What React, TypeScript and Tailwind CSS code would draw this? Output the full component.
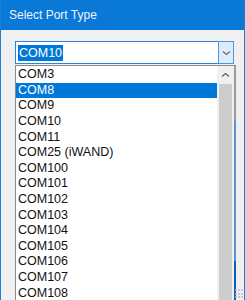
import React from "react";

const items = [
  "COM3",
  "COM8",
  "COM9",
  "COM10",
  "COM11",
  "COM25 (iWAND)",
  "COM100",
  "COM101",
  "COM102",
  "COM103",
  "COM104",
  "COM105",
  "COM106",
  "COM107",
  "COM108",
];

export default function App() {
  return (
    <div
      className="relative w-[245px] h-[300px] overflow-hidden bg-[#f0f0f0] border-x border-[#1a7fd6] flex flex-col"
      style={{ fontFamily: '"Liberation Sans", Arial, sans-serif' }}
    >
      <div className="h-[30px] shrink-0 bg-[#0a78d7] flex items-center pl-[8px] text-[12px] text-[#eef5fc]">
        Select Port Type
      </div>
      <div className="pt-[11px] pl-[14px] pr-[10px] flex flex-col">
        <div className="h-[23px] w-[219px] border border-[#2b86d9] bg-white flex">
          <div className="flex-1 flex items-center pl-[2px]">
            <span className="bg-[#0078d7] text-white text-[12.5px] leading-[16px] px-px">COM10</span>
          </div>
          <div className="w-[16px] -my-px -mr-px border border-[#4d97dc] bg-[#dcecfc] flex items-center justify-center">
            <svg width="9" height="6" viewBox="0 0 9 6">
              <path d="M1 1.5 L4.5 4.5 L8 1.5" fill="none" stroke="#5a6a7a" strokeWidth="1.1" />
            </svg>
          </div>
        </div>
        <div className="mt-[1px] w-[221px] flex border-t border-l border-[#8a8a8a] bg-white">
          <div className="flex-1 flex flex-col pt-[1px]">
            {items.map((it) => (
              <div
                key={it}
                className={
                  "h-[15.6px] flex items-center pl-[2px] text-[12.5px] leading-[15px] " +
                  (it === "COM8" ? "bg-[#0078d7] text-white" : "text-[#111]")
                }
              >
                {it}
              </div>
            ))}
            <div className="h-[16px]" />
          </div>
          <div className="w-[17px] bg-[#f0f0f0] flex flex-col items-center">
            <div className="h-[18px] w-full flex items-center justify-center">
              <svg width="9" height="6" viewBox="0 0 9 6">
                <path d="M1 4.5 L4.5 1.5 L8 4.5" fill="none" stroke="#606060" strokeWidth="1.3" />
              </svg>
            </div>
            <div className="w-[13px] flex-1 bg-[#cdcdcd]" />
          </div>
          <div className="w-[2px] flex flex-col">
            <div className="h-[55px] bg-[#9a9a9a]" />
            <div className="h-[140px] bg-[#5e93cc]" />
            <div className="flex-1 bg-[#0d5fb3]" />
          </div>
        </div>
      </div>
      <div className="absolute right-[1px] bottom-[1px] w-[8px] h-[10px] grid grid-cols-3 gap-[1px] opacity-70">
        {Array.from({ length: 9 }).map((_, i) => (
          <div key={i} className="w-[2px] h-[2px] bg-[#b8b8b8]" />
        ))}
      </div>
    </div>
  );
}
